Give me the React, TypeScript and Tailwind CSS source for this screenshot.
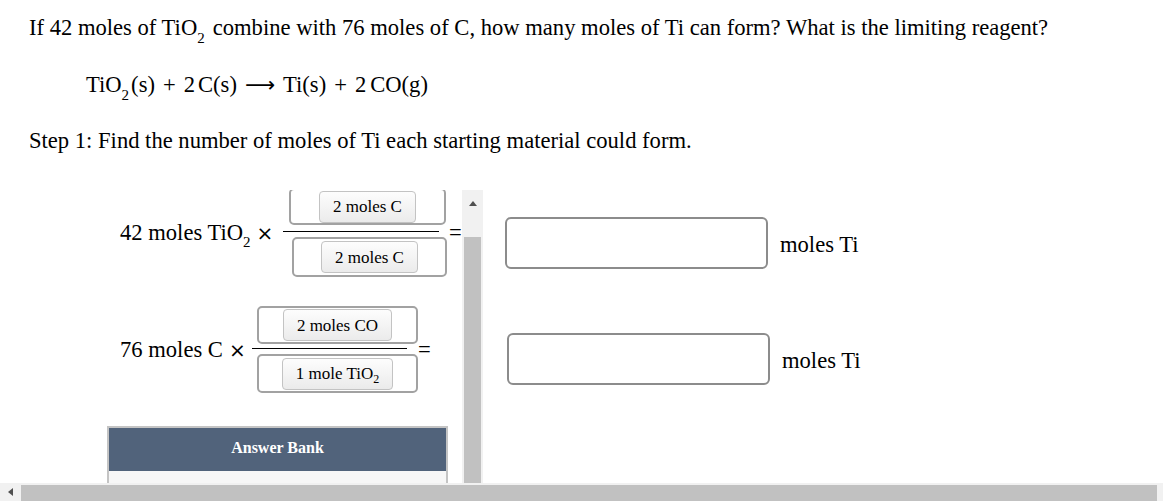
import React from "react";

const Sub = ({ children }: { children: React.ReactNode }) => (
  <sub className="text-[15px] bottom-[-0.5em]">{children}</sub>
);

const Times = () => <span className="ml-[6px] font-['DejaVu_Sans',sans-serif] text-[20px]">×</span>;

const Chip = ({ children }: { children: React.ReactNode }) => (
  <div className="h-[32px] px-[13px] flex items-center rounded-[4px] border border-[#c3c3c3] bg-gradient-to-b from-[#fdfdfd] to-[#ebebeb] text-[17px] leading-none whitespace-nowrap">
    {children}
  </div>
);

const Slot = ({ className, children }: { className: string; children: React.ReactNode }) => (
  <div className={`flex items-center justify-center rounded-[5px] border-2 border-[#a2a2a2] bg-white ${className}`}>
    {children}
  </div>
);

const AnswerRow = ({ className }: { className: string }) => (
  <div className={`flex items-center ${className}`}>
    <div className="w-[263px] h-[52px] rounded-[6px] border-2 border-[#8c8c8c] bg-white" />
    <span className="ml-[12px] pt-[3px] text-[22.6px]">moles Ti</span>
  </div>
);

export default function App() {
  return (
    <div className="w-[1163px] h-[501px] overflow-hidden flex flex-col bg-white text-black font-['Liberation_Serif',serif]">
      {/* question */}
      <div className="h-[190px] shrink-0 pl-[29px] pt-[14px] text-[22.6px] leading-[28px] whitespace-nowrap">
        <p>
          If 42 moles of TiO<Sub>2</Sub>
          <span className="ml-[8px]">combine with 76 moles of C, how many moles of Ti can form? What is the limiting reagent?</span>
        </p>
        <p className="mt-[29px] pl-[57px] flex items-baseline">
          <span>
            TiO<Sub>2</Sub>
            <span className="ml-[2px]">(s)</span>
          </span>
          <span className="mx-[8px]">+</span>
          <span>2</span>
          <span className="ml-[3px]">C(s)</span>
          <span className="mx-[8px] font-['DejaVu_Sans',sans-serif] text-[21px]">⟶</span>
          <span>Ti(s)</span>
          <span className="mx-[8px]">+</span>
          <span>2</span>
          <span className="ml-[4px]">CO(g)</span>
        </p>
        <p className="mt-[28px]">Step 1: Find the number of moles of Ti each starting material could form.</p>
      </div>

      <div className="flex flex-1 min-h-0">
        {/* fractions */}
        <div className="w-[462px] shrink-0 overflow-hidden flex flex-col text-[22.6px]">
          <div className="-mt-[2px] flex items-center">
            <span className="ml-[120px] w-[163px] shrink-0 whitespace-nowrap">
              42 moles TiO<Sub>2</Sub>
              <Times />
            </span>
            <div className="w-[164px] shrink-0 flex flex-col">
              <Slot className="ml-[6px] w-[157px] h-[37px]">
                <Chip>2 moles C</Chip>
              </Slot>
              <div className="mt-[6px] w-[156px] h-px bg-black" />
              <Slot className="mt-[5px] ml-[9px] w-[155px] h-[40px]">
                <Chip>2 moles C</Chip>
              </Slot>
            </div>
            <span className="ml-[2px]">=</span>
          </div>

          <div className="mt-[29px] flex items-center">
            <span className="ml-[120px] w-[132px] shrink-0 whitespace-nowrap">
              76 moles C<Times />
            </span>
            <div className="w-[166px] shrink-0 flex flex-col">
              <Slot className="ml-[5px] w-[161px] h-[38px]">
                <Chip>2 moles CO</Chip>
              </Slot>
              <div className="mt-[4px] w-[155px] h-px bg-black" />
              <Slot className="mt-[5px] ml-[5px] w-[161px] h-[39px]">
                <Chip>
                  1 mole TiO<sub className="text-[12px] bottom-[-0.45em]">2</sub>
                </Chip>
              </Slot>
            </div>
            <span>=</span>
          </div>

          <div className="mt-[33px] ml-[107px] w-[341px] shrink-0 border-2 border-[#c4c4c4]">
            <div className="h-[43px] pb-[3px] bg-[#51637b] flex items-center justify-center text-white text-[16px] font-bold">
              Answer Bank
            </div>
            <div className="h-[40px] bg-[#f7f7f7]" />
          </div>
        </div>

        {/* vertical scrollbar */}
        <div className="w-[21px] shrink-0 bg-[#f1f1f1] px-[2px] flex flex-col">
          <div className="h-[26px] flex items-center justify-center">
            <svg width="8" height="5" viewBox="0 0 8 5">
              <path d="M0 5 L4 0 L8 5 Z" fill="#505050" />
            </svg>
          </div>
          <div className="h-[21px]" />
          <div className="flex-1 bg-[#c1c1c1]" />
        </div>

        {/* answers */}
        <div className="flex-1 flex flex-col">
          <AnswerRow className="mt-[27px] ml-[22px]" />
          <AnswerRow className="mt-[64px] ml-[24px]" />
        </div>
      </div>

      {/* horizontal scrollbar */}
      <div className="h-[18px] shrink-0 bg-[#f1f1f1] flex">
        <div className="w-[21px] flex items-center justify-center">
          <svg width="5" height="8" viewBox="0 0 5 8">
            <path d="M5 0 L0 4 L5 8 Z" fill="#505050" />
          </svg>
        </div>
        <div className="w-[1136px] mt-[2px] bg-[#c1c1c1]" />
      </div>
    </div>
  );
}
